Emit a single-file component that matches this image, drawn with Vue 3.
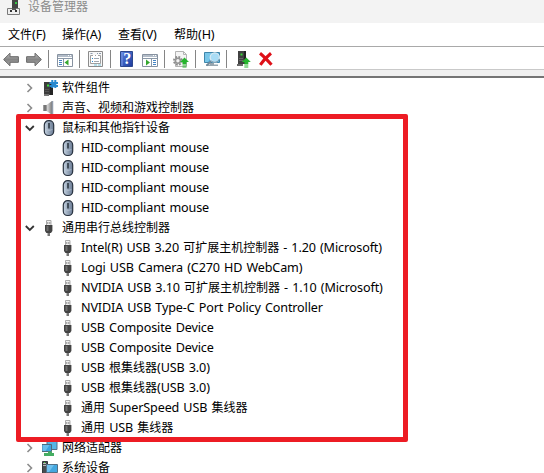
<script setup>
const menus = ['文件(F)', '操作(A)', '查看(V)', '帮助(H)']
const tools = ['back', 'forward', '|', 'tree', '|', 'props', '|', 'help', 'action', '|', 'update', '|', 'scan', '|', 'enable', 'remove']
const rows = [
  { icon: 'software', text: '软件组件', open: false },
  { icon: 'sound', text: '声音、视频和游戏控制器', open: false },
  { icon: 'mouse', text: '鼠标和其他指针设备', open: true },
  ...Array.from({ length: 4 }, () => ({ icon: 'mouse', text: 'HID-compliant mouse', child: true })),
  { icon: 'usb', text: '通用串行总线控制器', open: true },
  ...[
    'Intel(R) USB 3.20 可扩展主机控制器 - 1.20 (Microsoft)',
    'Logi USB Camera (C270 HD WebCam)',
    'NVIDIA USB 3.10 可扩展主机控制器 - 1.10 (Microsoft)',
    'NVIDIA USB Type-C Port Policy Controller',
    'USB Composite Device',
    'USB Composite Device',
    'USB 根集线器(USB 3.0)',
    'USB 根集线器(USB 3.0)',
    '通用 SuperSpeed USB 集线器',
    '通用 USB 集线器',
  ].map((text) => ({ icon: 'usb', text, child: true })),
  { icon: 'network', text: '网络适配器', open: false },
  { icon: 'system', text: '系统设备', open: false },
]
// Latin runs are set slightly larger than the Chinese ones.
const runs = (text) => text.match(/[\u3000-\u9fff]+|[^\u3000-\u9fff]+/g).map((t) => ({ t, latin: t.charCodeAt(0) < 0x3000 }))
</script>

<template>
  <div class="window">
    <svg class="defs" width="0" height="0" aria-hidden="true">
      <defs>
        <linearGradient id="arrowFill" x1="0" y1="0" x2="0" y2="1">
          <stop offset="0" stop-color="#bcbcbc" /><stop offset=".5" stop-color="#858585" /><stop offset="1" stop-color="#a6a6a6" />
        </linearGradient>
        <linearGradient id="mouseFill" x1="0" x2="1">
          <stop offset="0" stop-color="#c9d6e4" /><stop offset=".5" stop-color="#95a5b8" /><stop offset="1" stop-color="#6b7c95" />
        </linearGradient>
        <linearGradient id="helpFill" x1="0" x2="1" y2="1">
          <stop offset="0" stop-color="#5b83e0" /><stop offset="1" stop-color="#1d3a9c" />
        </linearGradient>
        <linearGradient id="soundFill" x1="0" x2="1">
          <stop offset="0" stop-color="#858585" /><stop offset=".5" stop-color="#d2d2d2" /><stop offset="1" stop-color="#777" />
        </linearGradient>
      </defs>
      <symbol id="back" viewBox="0 0 16 18">
        <path d="M.6 9.5 7 3.2v3.5h8.4v5.6H7v3.5z" fill="url(#arrowFill)" stroke="#686868" />
      </symbol>
      <symbol id="forward" viewBox="0 0 16 18">
        <path d="M15.4 9.5 9 3.2v3.5H.6v5.6H9v3.5z" fill="url(#arrowFill)" stroke="#686868" />
      </symbol>
      <symbol id="tree" viewBox="0 0 16 18">
        <path d="M.5 4.5h15v12H.5z" fill="#fff" stroke="#8792a0" /><path d="M1 5h14v2H1z" fill="#b3bdc9" />
        <path d="M11 5.5h1M13 5.5h1" stroke="#fff" /><path d="M1 8.5h14M6.5 8v8" stroke="#8a98a8" />
        <path d="M2 10.5h3M2 12.5h3M2 14.5h3" stroke="#4384c4" /><path d="M11.5 9.5v6l-4-3z" fill="#35a72e" />
      </symbol>
      <symbol id="props" viewBox="0 0 16 18">
        <path d="M.5 1.5h14v15H.5z" fill="#f7f7f7" stroke="#8b8b8b" /><path d="M2.5 5.5h10v8h-10z" fill="#fff" stroke="#a0a0a0" />
        <path d="M2.5 3.5h2M9 3.5h1M11 3.5h2" stroke="#8c9bad" /><path d="M5 5.5h2M8 5.5h2" stroke="#fff" />
        <path d="M4 8.5h1M4 11.5h1" stroke="#298bd0" /><path d="M6 8.5h5M6 11.5h5" stroke="#a0a7af" />
        <path d="M6 15h3M10 15h3" stroke="#75c5dc" />
      </symbol>
      <symbol id="help" viewBox="0 0 16 18">
        <path d="M1.5 1.5h12v15h-12z" fill="url(#helpFill)" stroke="#2c478d" /><path d="M3 2v14" stroke="#7998e4" />
        <text x="8.2" y="14.2" text-anchor="middle" font-family="Liberation Serif, serif" font-size="16" font-weight="700" fill="#fff">?</text>
      </symbol>
      <symbol id="action" viewBox="0 0 16 18">
        <path d="M.5 4.5h15v12H.5z" fill="#fff" stroke="#8792a0" /><path d="M1 5h14v2H1z" fill="#b3bdc9" />
        <path d="M11 5.5h1M13 5.5h1" stroke="#fff" /><path d="M1 8.5h14M9.5 8v8" stroke="#8a98a8" />
        <path d="M11 10.5h3M11 12.5h3M11 14.5h3" stroke="#4384c4" /><path d="M4 9.5v6l4-3z" fill="#35a72e" />
      </symbol>
      <symbol id="update" viewBox="0 0 16 18">
        <path d="M2.5 1.5h8l3 3v12h-11z" fill="#f4f4f4" stroke="#b3b3b3" /><path d="M10.5 1.5v3h3" fill="none" stroke="#b3b3b3" />
        <circle cx="4.9" cy="10.8" r="4" fill="none" stroke="#8a8a8a" stroke-width="1.8" stroke-dasharray="1.8 1.35" />
        <circle cx="4.9" cy="10.8" r="2.5" fill="#f4f4f4" stroke="#949494" stroke-width="1.6" />
        <path d="M11.5 7.5 16 12h-2.5v2h-4v-2H7z" fill="#26b52d" /><path d="M9.5 15h4M9.5 17h4" stroke="#26b52d" />
      </symbol>
      <symbol id="scan" viewBox="0 0 16 18">
        <path d="M.5 2.5h15v10H.5z" fill="#4ba8da" stroke="#3f86ab" /><path d="M1 3h9l-6 9H1z" fill="#79c6e8" />
        <path d="M6 13h4v1.5h4v1.5H2v-1.5h4z" fill="#97a5ae" /><path d="m7.3 11-4.8 4.6" stroke="#73899a" stroke-width="1.8" />
        <circle cx="10.8" cy="7.5" r="4.6" fill="#a9dcf5" stroke="#dcebf3" stroke-width="1.2" />
        <path d="M15.3 9a4.8 4.8 0 0 1-8 1.8" fill="none" stroke="#668ea6" />
      </symbol>
      <symbol id="enable" viewBox="0 0 16 18">
        <path d="M3 1h8v13H3z" fill="#414141" /><path d="M9 1h2v13H9z" fill="#222" /><path d="M5.5 3.5h2v2h-2z" fill="#38d737" />
        <path d="M4 8.5h4M4 10.5h4" stroke="#686868" /><path d="M2 14h6v2H2z" fill="#686868" />
        <path d="M11.3 7.5 15.8 12h-2.5v2h-4v-2H6.8z" fill="#26b52d" /><path d="M9.3 15h4M9.3 17h4" stroke="#26b52d" />
      </symbol>
      <symbol id="remove" viewBox="0 0 16 18">
        <path d="M2 3.3q5 4.2 11.5 11.5M13 3.3Q6.5 8.7 2.3 14.8" fill="none" stroke="#de1018" stroke-width="3.1" />
      </symbol>

      <symbol id="software" viewBox="0 0 16 18">
        <path d="M2 3h9v13H2z" fill="#3d3d3d" /><path d="M8 3h3v13H8z" fill="#242424" /><path d="M5 5.5h2v2H5z" fill="#40dd3c" />
        <path d="M3 10.5h4M3 12.5h4" stroke="#555" /><path d="M2 15h5v2H2z" fill="#777" />
        <path d="M9.3 1h2v2h1V1h2v2H16v2h-1.7v1H16v2h-1.7v1h-2V8h-1v1h-2V8H7.5V6h1.8V5H7.5V3h1.8z" fill="#2989cf" />
      </symbol>
      <symbol id="sound" viewBox="0 0 16 18">
        <path d="M1.5 6h3l5.5-4v14l-5.5-4h-3z" fill="url(#soundFill)" /><path d="M1.5 6h3v6h-3z" fill="#777" /><path d="M10.5 2v14" stroke="#909baa" stroke-width="1.5" />
      </symbol>
      <symbol id="mouse" viewBox="0 0 16 18">
        <rect x="2.3" y="1.7" width="9.4" height="14.8" rx="4.3" fill="url(#mouseFill)" stroke="#293340" stroke-width="1.2" />
        <path d="M4 10.5q3.2 2 6.4 0" fill="none" stroke="#c1ccda" stroke-width=".6" /><path d="M7 4v5.5" stroke="#26303b" stroke-width="1.5" />
      </symbol>
      <symbol id="usb" viewBox="0 0 16 18">
        <path d="M4.5 1.5h4.5v5H4.5z" fill="#f0f0f0" stroke="#ababab" /><path d="M5.8 3v2M7.8 3v2" stroke="#777" stroke-width=".8" />
        <path d="M3 6h7.4v6L9 14H4.4L3 12z" fill="#434343" /><path d="M4.5 7h2v5h-2z" fill="#6d6d6d" /><path d="M5.5 14h2.5v3H5.5z" fill="#777" />
      </symbol>
      <symbol id="network" viewBox="0 0 16 18">
        <path d="M5 2.5h10v8H5z" fill="#56b5e5" stroke="#54718a" /><path d="M0 5.5h9.5v7H0z" fill="#3ba3df" stroke="#4f6a7c" />
        <path d="M.5 6h7l-4 6h-3z" fill="#69bfed" /><path d="M6 12.5h4V14h2v3H2v-3h4z" fill="#45ad62" />
      </symbol>
      <symbol id="system" viewBox="0 0 16 18">
        <path d="M.5 2.5h5v13h-5z" fill="#484d50" stroke="#34393c" /><path d="M1 4.5h3M1 6.5h3" stroke="#bbb" /><path d="M2 3h1v1H2z" fill="#45d13e" />
        <path d="M4.5 5.5h11v8h-11z" fill="#43a7df" stroke="#527086" /><path d="M5 6h7l-5 7H5z" fill="#70c1ee" /><path d="M7 15.5h7" stroke="#6b7f8d" />
      </symbol>
    </svg>

    <header class="title">
      <svg class="app-icon" viewBox="0 0 16 16">
        <path d="M6 0h6v9H6z" fill="#444" /><path d="M9 2h2v2H9z" fill="#36c646" />
        <path d="M1.5 8.5h12v6h-12z" fill="#eee" stroke="#797979" /><path d="M4 10h2v2H4zM9 10h2v2H9z" fill="#333" /><path d="M6 8h4v2H6z" fill="#555" />
      </svg>
      <span>设备管理器</span>
    </header>
    <nav class="menu">
      <span v-for="m in menus" :key="m">{{ m.slice(0, 2) }}<span class="latin">{{ m.slice(2) }}</span></span>
    </nav>
    <div class="toolbar">
      <template v-for="(t, i) in tools" :key="i">
        <i v-if="t === '|'" class="sep"></i>
        <svg v-else class="tool"><use :href="'#' + t" /></svg>
      </template>
    </div>
    <div class="band"></div>
    <main class="tree">
      <div v-for="(r, i) in rows" :key="i" class="row" :class="{ child: r.child }">
        <svg v-if="!r.child" class="chevron" :class="{ open: r.open }" viewBox="0 0 10 10">
          <path :d="r.open ? 'M.8 3l4 4 4-4' : 'M2.5 1l4 4-4 4'" />
        </svg>
        <svg class="icon"><use :href="'#' + r.icon" /></svg>
        <span class="label"><span v-for="(p, j) in runs(r.text)" :key="j" :class="{ latin: p.latin }">{{ p.t }}</span></span>
      </div>
    </main>
    <div class="highlight"></div>
  </div>
</template>

<style>
body { margin: 0; overflow: hidden; }
</style>
<style scoped>
.window { position: relative; width: 544px; height: 473px; overflow: hidden; background: #fff; color: #000; font: 12px/20px "Noto Sans", "Noto Sans CJK SC", sans-serif; }
.defs { position: absolute; }
.title { display: flex; height: 23px; background: #f3f3f3; color: #8c8c8c; line-height: 14px; padding-left: 6px; gap: 6px; box-sizing: border-box; }
.app-icon { width: 16px; height: 16px; }
.menu { display: flex; height: 23px; gap: 16px; padding-left: 8px; line-height: 24px; }
.menu > span { width: 40px; white-space: nowrap; }
.menu > span:first-child { width: 38px; }
.toolbar { display: flex; height: 24px; box-sizing: border-box; border-top: 1px solid #a9a9a9; border-bottom: 1px solid #c9c9c9; padding: 3px 0 0 3px; }
.tool { width: 16px; height: 18px; }
.tool + .tool { margin-left: 7px; }
.sep { width: 1px; height: 18px; margin: 0 8px 0 6px; background: #858585; }
.band { height: 8px; box-sizing: border-box; background: #f0f0f0; border-bottom: 2px solid #747474; }
.row { display: flex; height: 20px; align-items: center; padding-left: 25px; }
.row.child { padding-left: 61px; }
.chevron { width: 10px; height: 10px; margin-right: 7px; fill: none; stroke: #8c8c8c; stroke-width: 1.6; }
.chevron.open { stroke: #333; stroke-width: 1.8; }
.icon { width: 16px; height: 18px; margin-right: 4px; }
.label { white-space: pre; }
.latin { font-size: 12.6px; letter-spacing: -.13px; word-spacing: 1px; }
.highlight { position: absolute; left: 16px; top: 114px; width: 392px; height: 328px; box-sizing: border-box; border: 5px solid #ed1c24; border-radius: 2px; }
</style>
